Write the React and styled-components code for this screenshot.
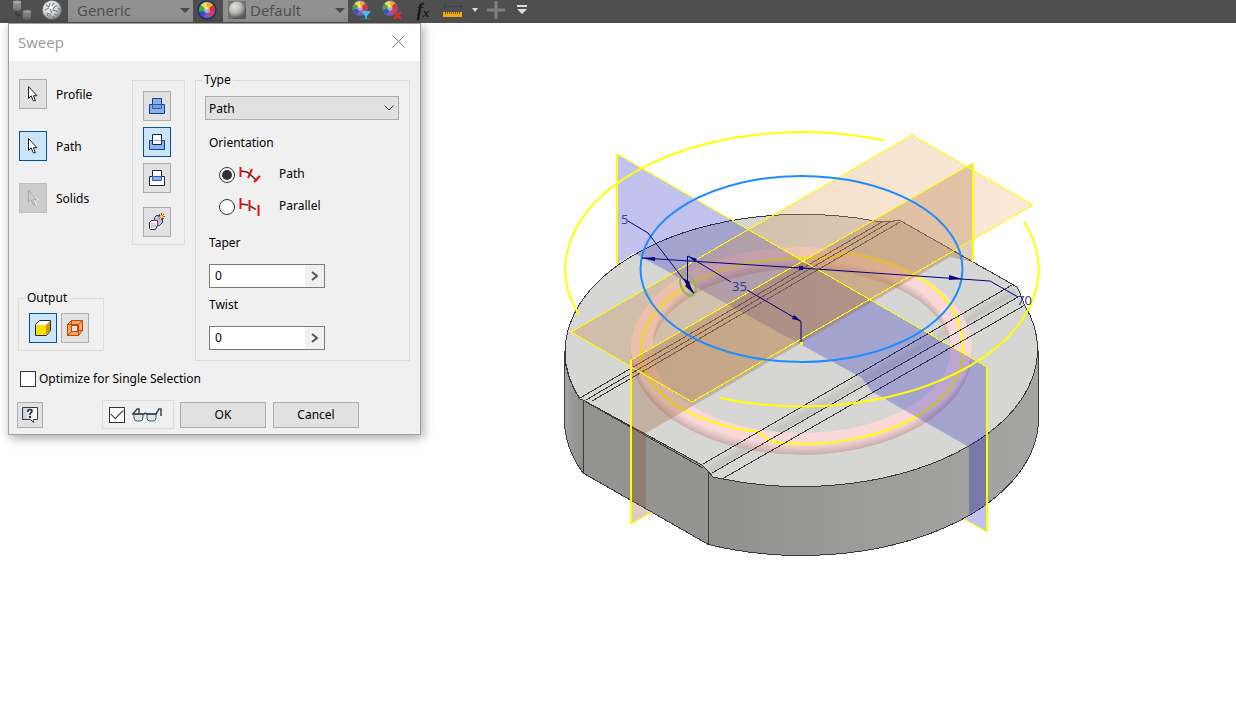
import React from "react";
import styled, { createGlobalStyle, css } from "styled-components";

const GlobalStyle = createGlobalStyle`
  * {
    box-sizing: border-box;
  }
  body {
    margin: 0;
    background: #fff;
    color: #000;
    font-family: "Noto Sans", "Open Sans", sans-serif;
    font-size: 12px;
    line-height: 16px;
  }
  button,
  input,
  select {
    font: inherit;
    color: inherit;
    margin: 0;
  }
`;

const App = () => {
  return (
    <Page>
      <GlobalStyle />
      <TopToolbar />
      <Workspace>
        <SweepDialog />
        <Model />
      </Workspace>
    </Page>
  );
};

export default App;

/* ---------- toolbar ---------- */

const TopToolbar = () => {
  return (
    <Toolbar>
      <ToolButton $width={20} $left={12} aria-label="Bodies">
        <svg width="20" height="20" viewBox="0 0 20 20">
          <path d="M1 1h8v8H1z" fill="#8a8a8a" />
          <ellipse cx="5" cy="2" rx="4" ry="1.5" fill="#a8a8a8" />
          <ellipse cx="5" cy="9" rx="4" ry="1.5" fill="#777" />
          <path d="M11 11h8v7h-8z" fill="#7c7c7c" />
          <ellipse cx="15" cy="11.5" rx="4" ry="1.5" fill="#989898" />
          <ellipse cx="15" cy="18" rx="4" ry="1.5" fill="#6b6b6b" />
          <path d="M4 12v3h4M6 13l2 2-2 2" fill="none" stroke="#333" />
        </svg>
      </ToolButton>
      <ToolButton $width={20} $left={10} aria-label="Material">
        <svg width="20" height="20" viewBox="0 0 20 20">
          <defs>
            <radialGradient id="ball" cx=".4" cy=".35" r=".65">
              <stop offset="0" stopColor="#fff" />
              <stop offset=".6" stopColor="#d2d4d6" />
              <stop offset="1" stopColor="#7d8185" />
            </radialGradient>
          </defs>
          <circle cx="10" cy="10" r="9.5" fill="url(#ball)" />
          <path
            d="M4 5l3 2M8 3l-1 4M12 3l-2 3M15 6l-3 1M3 10l4-2M8 9l2 4M12 10l4 2M5 13l3 1M9 14l-2 3M12 14l4 1M11 16l1 3M5 16l1-2M16 8l2 2M12 7l-1 4"
            stroke="#7f8285"
            strokeWidth="1.2"
          />
        </svg>
      </ToolButton>
      <ComboWrap $left={6}>
        <Combo aria-label="Material" defaultValue="Generic">
          <option>Generic</option>
        </Combo>
        <ComboArrow viewBox="0 0 10 5">
          <path d="M0 0h10L5 5z" fill="#4a4a4a" />
        </ComboArrow>
      </ComboWrap>
      <ToolButton $width={20} $left={4} aria-label="Appearance">
        <ColorWheel size={20} ring />
      </ToolButton>
      <ComboWrap $left={6}>
        <Combo aria-label="Appearance" defaultValue="Default" $swatch>
          <option>Default</option>
        </Combo>
        <Swatch viewBox="0 0 18 18">
          <defs>
            <radialGradient id="swatch" cx=".35" cy=".3" r=".7">
              <stop offset="0" stopColor="#e2e2de" />
              <stop offset=".6" stopColor="#b6b6b2" />
              <stop offset="1" stopColor="#6b6b69" />
            </radialGradient>
          </defs>
          <path d="M0 0h18v18H0z" fill="#727272" />
          <path d="M18 6v12H4z" fill="#5a5a5a" />
          <circle cx="9" cy="8.5" r="8" fill="url(#swatch)" />
        </Swatch>
        <ComboArrow viewBox="0 0 10 5">
          <path d="M0 0h10L5 5z" fill="#4a4a4a" />
        </ComboArrow>
      </ComboWrap>
      <ToolButton $width={20} $left={4} aria-label="Adjust appearance">
        <svg width="20" height="20" viewBox="0 0 20 20">
          <Wheel cx={8} cy={8} r={7.5} />
          <path d="M9 11h10l-4 5v3h-2v-3z" fill="#3fc0f4" />
          <path d="M8 19h11" stroke="#2f7fb4" />
        </svg>
      </ToolButton>
      <ToolButton $width={20} $left={10} aria-label="Clear appearance">
        <svg width="20" height="20" viewBox="0 0 20 20">
          <Wheel cx={8} cy={8} r={7.5} />
          <path d="M12 12l7 7M19 12l-7 7" stroke="#f02a20" strokeWidth="2" />
        </svg>
      </ToolButton>
      <ToolButton $width={20} $left={11} aria-label="Parameters">
        <Fx>
          f<small>x</small>
        </Fx>
      </ToolButton>
      <ToolButton $width={20} $left={10} aria-label="Measure">
        <svg width="20" height="20" viewBox="0 0 20 20">
          <path d="M1 6.5h18M1.5 4v5M18.5 4v5" stroke="#39424d" />
          <path d="M0 12h19v5H0z" fill="#f0a818" />
          <path
            d="M2.5 12v2M4.5 12v2M6.5 12v2M8.5 12v2M10.5 12v2M12.5 12v2M14.5 12v2M16.5 12v2"
            stroke="#8a5a00"
          />
        </svg>
      </ToolButton>
      <ToolButton $width={6} $left={9} aria-label="Measure options">
        <svg width="6" height="4" viewBox="0 0 6 4">
          <path d="M0 0h6L3 4z" fill="#ddd" />
        </svg>
      </ToolButton>
      <ToolButton $width={18} $left={9} aria-label="Add">
        <svg width="18" height="18" viewBox="0 0 18 18">
          <path d="M9 0v18M0 9h18" stroke="#808080" strokeWidth="3" />
        </svg>
      </ToolButton>
      <ToolButton $width={10} $left={12} aria-label="Customize">
        <svg width="10" height="10" viewBox="0 0 10 10">
          <path d="M0 0h10v2H0zM0 4h10L5 9z" fill="#ddd" />
        </svg>
      </ToolButton>
    </Toolbar>
  );
};

const wheelColors = ["#f2a93b", "#e2302c", "#d4406a", "#8d55c8", "#2f55c8", "#4fa83c", "#e6e05a"];

const Wheel = ({ cx, cy, r }) => {
  const step = (Math.PI * 2) / wheelColors.length;
  const point = (i) => {
    const a = i * step - Math.PI / 2;
    return `${cx + r * Math.cos(a)} ${cy + r * Math.sin(a)}`;
  };
  return (
    <g>
      {wheelColors.map((color, i) => (
        <path key={color} d={`M${cx} ${cy}L${point(i)}A${r} ${r} 0 0 1 ${point(i + 1)}z`} fill={color} />
      ))}
      <circle cx={cx} cy={cy} r={r * 0.35} fill="#fff" opacity=".5" />
      <circle cx={cx} cy={cy} r={r} fill="none" stroke="#5a6890" />
    </g>
  );
};

const ColorWheel = ({ size, ring }) => (
  <svg width={size} height={size} viewBox="0 0 20 20">
    <Wheel cx={10} cy={10} r={8.5} />
    {ring && <circle cx="10" cy="10" r="9" fill="none" stroke="#1c3468" strokeWidth="1.5" />}
  </svg>
);

/* ---------- dialog ---------- */

const selectors = [
  { title: "Profile", state: "normal" },
  { title: "Path", state: "active" },
  { title: "Solids", state: "disabled" },
];

const SweepDialog = () => {
  return (
    <Dialog role="dialog" aria-label="Sweep">
      <TitleBar>
        <Title>Sweep</Title>
        <CloseButton aria-label="Close">
          <svg width="13" height="13" viewBox="0 0 13 13">
            <path d="M.5 .5l12 12M12.5 .5l-12 12" stroke="#777" />
          </svg>
        </CloseButton>
      </TitleBar>
      <Body>
        <Columns>
          <LeftColumn>
            <SelectorList>
              {selectors.map((item) => (
                <Selector key={item.title}>
                  <IconButton $active={item.state === "active"} disabled={item.state === "disabled"}>
                    <Cursor disabled={item.state === "disabled"} />
                  </IconButton>
                  <SelectorText>{item.title}</SelectorText>
                </Selector>
              ))}
            </SelectorList>
            <OutputGroup>
              <Legend>Output</Legend>
              <IconButton $active aria-label="Solid">
                <SolidCube />
              </IconButton>
              <IconButton aria-label="Surface">
                <SurfaceCube />
              </IconButton>
            </OutputGroup>
          </LeftColumn>
          <Operations>
            <IconButton aria-label="Join">
              <BooleanIcon top="#8eb2e0" base="#8eb2e0" overlap="#7a9fd6" line="#0c3ca8" topLine="#0c3ca8" />
            </IconButton>
            <IconButton $active aria-label="Cut">
              <BooleanIcon top="#fff" base="#8eb2e0" overlap="#fff" line="#0c3ca8" topLine="#14284e" cut />
            </IconButton>
            <IconButton aria-label="Intersect">
              <BooleanIcon top="#fff" base="#fff" overlap="#8eb2e0" line="#14284e" topLine="#14284e" />
            </IconButton>
            <NewSolidButton aria-label="New solid">
              <NewSolid />
            </NewSolidButton>
          </Operations>
          <TypeGroup>
            <Legend>Type</Legend>
            <TypeSelectWrap>
              <TypeSelect aria-label="Type" defaultValue="Path">
                <option>Path</option>
              </TypeSelect>
              <TypeArrow viewBox="0 0 10 6">
                <path d="M.5 .5L5 5L9.5 .5" fill="none" stroke="#333" />
              </TypeArrow>
            </TypeSelectWrap>
            <Heading>Orientation</Heading>
            <RadioRow>
              <Radio type="radio" name="orientation" defaultChecked />
              <svg width="22" height="20" viewBox="0 0 22 20">
                <path d="M2 6l6 1 6 5 4 4" fill="none" stroke="#333" strokeWidth="1.5" />
                <path d="M1.5 2v10M13 4L9 13M21 11l-6 6" stroke="#f20d0d" strokeWidth="2" />
              </svg>
              <RadioText>Path</RadioText>
            </RadioRow>
            <RadioRow>
              <Radio type="radio" name="orientation" />
              <svg width="22" height="20" viewBox="0 0 22 20">
                <path d="M2 7l7 1 9 5" fill="none" stroke="#333" strokeWidth="1.5" strokeDasharray="7 2" />
                <path d="M1.5 1v11M10.5 3v11M19.5 8v11" stroke="#f20d0d" strokeWidth="2" />
              </svg>
              <RadioText>Parallel</RadioText>
            </RadioRow>
            <FieldLabel htmlFor="taper">Taper</FieldLabel>
            <ValueField id="taper" />
            <TwistLabel htmlFor="twist">Twist</TwistLabel>
            <ValueField id="twist" />
          </TypeGroup>
        </Columns>
        <OptimizeRow>
          <CheckBox type="checkbox" />
          Optimize for Single Selection
        </OptimizeRow>
        <Footer>
          <HelpButton aria-label="Help">
            <svg width="16" height="16" viewBox="0 0 16 16">
              <defs>
                <linearGradient id="help" x2="1">
                  <stop offset="0" stopColor="#c3cedb" />
                  <stop offset="1" stopColor="#fff" />
                </linearGradient>
              </defs>
              <path d="M.5 .5h15v12h-4v3l-3-3h-8z" fill="url(#help)" stroke="#333c48" />
              <path d="M6 5V4q0-1.500 2-1.500T10 4q0 1-1 1.600T8 8" fill="none" stroke="#222" strokeWidth="1.5" />
              <path d="M7 9h2v2H7z" fill="#222" />
            </svg>
          </HelpButton>
          <Preview>
            <CheckBox type="checkbox" aria-label="Preview" defaultChecked />
            <Glasses />
          </Preview>
          <TextButton>OK</TextButton>
          <TextButton>Cancel</TextButton>
        </Footer>
      </Body>
    </Dialog>
  );
};

const ValueField = ({ id }) => (
  <Field>
    <FieldInput id={id} defaultValue="0" />
    <FieldButton aria-label="More">
      <svg width="8" height="10" viewBox="0 0 8 10">
        <path d="M1 1l5 4-5 4" fill="none" stroke="#555" strokeWidth="2" />
      </svg>
    </FieldButton>
  </Field>
);

const Cursor = ({ disabled }) => (
  <svg width="12" height="18" viewBox="0 0 12 18">
    {disabled && <path d="M2 2v12l3-3 2 5h3l-2-5h4z" fill="#fff" />}
    <path
      d="M1.5 1.5v12l2.700-2.600 2 4.800h2.200l-2-5h3.600z"
      fill={disabled ? "#ccc" : "#fff"}
      stroke={disabled ? "#a6a6a6" : "#1a2230"}
    />
  </svg>
);

const BooleanIcon = ({ top, base, overlap, line, topLine, cut }) => (
  <svg width="16" height="16" viewBox="0 0 16 16">
    <path d="M.5 6.5h15v9H.5z" fill={base} stroke={line} />
    <path d="M3.5 .5h9v10h-9z" fill={top} />
    <path d="M3.5 6.5h9v4h-9z" fill={overlap} />
    <path d="M3.5 6.5v-6h9v6" fill="none" stroke={topLine} />
    <path d="M3.5 6.5v4h9v-4" fill="none" stroke={cut ? topLine : "#2a5cc4"} />
    <path d="M4 6.5h8" stroke={cut ? "#aaa" : "#2a5cc4"} />
  </svg>
);

const NewSolid = () => (
  <svg width="16" height="18" viewBox="0 0 16 18">
    <path d="M5.5 4.5l2-2h4l2 2v5l-3 3h-5z" fill="#a9c6ee" stroke="#0c3ca8" />
    <path d="M.5 9.5l2-2h6v5l-2 4h-5l-1-1z" fill="#fff" stroke="#14284e" />
    <path d="M2 10h5v5H2z" fill="#d0d0d0" />
    <path d="M4 7.5h4.5V12" fill="none" stroke="#e01414" />
    <path d="M12.500 0v7M9 3.500h7M10 1l5 5M15 1l-5 5" stroke="#d64000" />
    <circle cx="12.5" cy="3.5" r="1.5" fill="#ffe14a" />
  </svg>
);

const SolidCube = () => (
  <svg width="18" height="18" viewBox="0 0 18 18">
    <path d="M1.5 5.5l4-4h11v10l-4 5h-11z" fill="#fff" stroke="#14284e" />
    <path d="M2 6h10v10H2z" fill="#ffdc00" />
    <path d="M12 6l4-4v9.500L12 16z" fill="#d69a00" />
  </svg>
);

const SurfaceCube = () => (
  <svg width="18" height="18" viewBox="0 0 18 18">
    <path d="M1.5 5.5l4-4h11v10l-4 5h-11z" fill="#ffa565" stroke="#b84a0c" />
    <path d="M5.5 6.5h6v6h-6z" fill="#e1e1e1" stroke="#b84a0c" />
    <path
      d="M1.5 5.5h11v11M12.5 5.5l4-4M5.5 1.5v5M1.5 16.5l4-4M11.5 11.5h5"
      fill="none"
      stroke="#b84a0c"
    />
  </svg>
);

const Glasses = () => (
  <svg width="30" height="14" viewBox="0 0 30 14">
    <path d="M2 6h9v4q0 3-3 3H5q-3 0-3-3zM15 6h9v4q0 3-3 3h-3q-3 0-3-3z" fill="#d7e6ee" stroke="#4a5866" />
    <path d="M0 6h12q1.500-1.500 3 0h10" fill="none" stroke="#2f3a46" strokeWidth="1.5" />
    <path d="M1 6l4-5h2v4M24 6l3-5h2v7" fill="none" stroke="#3b4650" strokeWidth="1.5" />
  </svg>
);

/* ---------- 3D model ---------- */

const topFace =
  "M580 399A237 137 0 0 1 875 221L892 222L895 220L901 221L1010 283L1017 287L1020 293L1024 304A237 137 0 0 1 723 479L713 477L708 471L702 465L583 400z";
const sideFace =
  "M564.5 351V419A237 137 0 0 0 583 473L708.5 544.5A237 137 0 0 0 1038.5 419V351L1024 304L801 300L580 370z";

// each layer lifts the highlight a little higher on the tube
const tubeShades = [
  { lift: 2, color: "#d5b9b7" },
  { lift: 4, color: "#dec2c0" },
  { lift: 6, color: "#e8cac8" },
  { lift: 8, color: "#f2d2d0" },
  { lift: 10, color: "#fad8d7" },
];

const Tube = () => (
  <g fill="none" strokeWidth="22">
    <mask id="tube" maskUnits="userSpaceOnUse" x="600" y="230" width="400" height="240">
      <ellipse cx="801.5" cy="351" rx="160" ry="93" stroke="#fff" />
    </mask>
    <g mask="url(#tube)">
      <ellipse cx="801.5" cy="351" rx="160" ry="93" stroke="#cdb2b0" />
      {tubeShades.map((shade) => (
        <ellipse key={shade.lift} cx="801.5" cy={351 - shade.lift} rx="160" ry="93" stroke={shade.color} />
      ))}
    </g>
  </g>
);

const Model = () => {
  return (
    <Scene viewBox="421 23 815 694" role="img" aria-label="Model with work planes">
      <defs>
        <linearGradient id="side" gradientUnits="userSpaceOnUse" x1="564" x2="1039" y1="0" y2="0">
          <stop offset="0" stopColor="#a3a4a2" />
          <stop offset=".04" stopColor="#8e8f8d" />
          <stop offset=".041" stopColor="#939492" />
          <stop offset=".304" stopColor="#939492" />
          <stop offset=".305" stopColor="#90918f" />
          <stop offset=".6" stopColor="#9b9b99" />
          <stop offset="1" stopColor="#a5a5a3" />
        </linearGradient>
        <linearGradient id="groove" gradientUnits="userSpaceOnUse" x1="850" y1="379" x2="857" y2="391">
          <stop offset="0" stopColor="#d6d7d5" />
          <stop offset=".6" stopColor="#c3c4c2" />
          <stop offset="1" stopColor="#d2d3d1" />
        </linearGradient>
        <linearGradient id="sheet" gradientUnits="userSpaceOnUse" x1="571" x2="1033" y1="0" y2="0">
          <stop offset="0" stopColor="#c07c40" />
          <stop offset=".5" stopColor="#d69858" />
          <stop offset="1" stopColor="#f4b478" />
        </linearGradient>
      </defs>

      <path d={sideFace} fill="url(#side)" />
      <path d={topFace} fill="#d6d7d5" />
      <path d="M703 464L1012 285L1018 297L712 473z" fill="url(#groove)" />

      <Tube />
      <path
        d="M777 442.5Q768 440 762 435T750 431C670 418 641 380 641 351C641 300 712 258 801 258L823 258Q836 257 845 253Q900 260 937 290Q963 315 963 351A161 93 0 0 1 801 444L780 443z"
        fill="none"
        stroke="#ff0"
        strokeWidth="2"
      />

      <g fill="none" stroke="#3a3a3a" shapeRendering="crispEdges">
        <path d="M580 398L882 222M586 400L890 222M592 401L900 222" />
        <path d="M703 464L1012 285M712 473L1018 297M722 479L1025 305" />
        <path d={topFace} />
        <path d="M586 402L703 468" />
        <path d="M564.5 351V419A237 137 0 0 0 583 473L708.5 544.5A237 137 0 0 0 1038.5 419V351" />
        <path d="M564.5 351A237 137 0 0 0 580 399M583.5 400V473M708.5 471V544" />
      </g>

      {/* work planes */}
      <path d="M617 154L987 367V437L969 447L871 391L862 378L634 253L617 264z" fill="#0d0dbb" opacity=".25" />
      <path d="M969 447L987 437V504L969 514z" fill="#3c3cba" opacity=".4" />
      <path d="M964 519L987 504V532z" fill="#0d0dbb" opacity=".25" />
      <path d="M631 360L973 163V262L950 257L646 433L631 425z" fill="#965a28" opacity=".3" />
      <path d="M631 425L646 433V508L631 500z" fill="#8a5a36" opacity=".4" />
      <path d="M631 500L652 512L631 524z" fill="#965a28" opacity=".3" />
      <path d="M912 135L1033 205L692 402L571 332z" fill="url(#sheet)" opacity=".3" />
      <g fill="none" stroke="#ff0" shapeRendering="crispEdges">
        <path d="M617 154L987 367M912 135L1033 205L692 402L571 332zM631 360L973 163M631 524L652 512M964 519L987 532" />
        <path d="M617 154V265M987 367V532M973 163V262M631 360V524" strokeWidth="2" />
      </g>

      {/* sketch curves */}
      <g fill="none" strokeWidth="2">
        <ellipse cx="801.5" cy="269" rx="161" ry="93" stroke="#1e8cff" />
        <path d="M884 140.5A237 137 0 0 0 579 315M1024 222A237 137 0 0 1 720 398" stroke="#ff0" />
        <ellipse cx="688" cy="285" rx="7" ry="11" stroke="#86b562" transform="rotate(-25 688 285)" />
      </g>

      {/* dimensions */}
      <g fill="none" stroke="#000080">
        <path d="M642 258L801 268L990 281L1018 297" />
        <path d="M628 221L648 233L694 293M687.5 256V285" />
        <path d="M688 256L731 282M747 290L801 321.5V343" />
      </g>
      <g fill="#000080">
        <path d="M642 258l13-1v4zM962 279l-13-4v5zM688 256l9 3-2 3zM801 321l-9-2 2-4zM694 294l-9-8 4-4zM683 278l7 4-3 4z" />
        <path d="M799 266h4v4h-4z" />
      </g>
      <path d="M800 342h3v3h-3z" fill="#ff0" />
      <DimText x="621" y="224">5</DimText>
      <DimText x="732" y="291">35</DimText>
      <DimText x="1017" y="305">70</DimText>
    </Scene>
  );
};

/* ---------- styles ---------- */

const Page = styled.div`
  display: flex;
  flex-direction: column;
  min-height: 100vh;
`;

const Toolbar = styled.header`
  display: flex;
  align-items: center;
  height: 23px;
  padding-bottom: 3px;
  background: #4f4f4f;
`;

const ToolButton = styled.button`
  display: flex;
  align-items: center;
  justify-content: center;
  flex: none;
  width: ${(props) => props.$width}px;
  margin-left: ${(props) => props.$left}px;
  padding: 0;
  border: 0;
  background: none;
`;

const Fx = styled.span`
  display: flex;
  align-items: flex-end;
  height: 20px;
  color: #161616;
  font-family: "Liberation Serif", serif;
  font-size: 18px;
  font-style: italic;
  font-weight: bold;
  line-height: 20px;
  small {
    font-size: 13px;
    line-height: 14px;
  }
`;

const ComboWrap = styled.div`
  display: grid;
  align-items: center;
  flex: none;
  width: 125px;
  margin-left: ${(props) => props.$left}px;
  > * {
    grid-area: 1 / 1;
  }
`;

const Combo = styled.select`
  appearance: none;
  width: 100%;
  height: 23px;
  padding: 0 24px 0 ${(props) => (props.$swatch ? 27 : 9)}px;
  border: 0;
  border-radius: 0;
  background: #919191;
  color: #4d4d4d;
  font-family: "Open Sans", sans-serif;
  font-size: 15px;
`;

const ComboArrow = styled.svg`
  justify-self: end;
  width: 10px;
  height: 5px;
  margin-right: 3px;
  pointer-events: none;
`;

const Swatch = styled.svg`
  width: 18px;
  height: 18px;
  margin-left: 5px;
  pointer-events: none;
`;

const Workspace = styled.main`
  display: flex;
  align-items: flex-start;
  flex: 1;
  padding-left: 8px;
`;

const Scene = styled.svg`
  flex: 1;
  align-self: stretch;
  min-width: 0;
`;

const DimText = styled.text`
  fill: #3a3a9c;
  font-family: "Noto Sans", sans-serif;
  font-size: 13px;
`;

const Dialog = styled.section`
  flex: none;
  width: 413px;
  border: 1px solid #a0a0a0;
  background: #f0f0f0;
  box-shadow: 2px 3px 10px rgba(0, 0, 0, 0.35);
`;

const TitleBar = styled.div`
  display: flex;
  align-items: center;
  justify-content: space-between;
  height: 37px;
  padding: 0 15px 2px 9px;
  background: #fff;
`;

const Title = styled.h1`
  margin: 0;
  color: #999;
  font-family: "Open Sans", sans-serif;
  font-size: 15px;
  font-weight: normal;
`;

const CloseButton = styled.button`
  display: flex;
  padding: 0;
  border: 0;
  background: none;
`;

const Body = styled.div`
  padding: 11px 10px 5px 8px;
`;

const Columns = styled.div`
  display: flex;
  align-items: flex-start;
`;

const LeftColumn = styled.div`
  display: flex;
  flex-direction: column;
  width: 115px;
  padding: 7px 0 0 1px;
`;

const SelectorList = styled.div`
  display: grid;
  gap: 22px;
  padding-left: 1px;
`;

const Selector = styled.label`
  display: flex;
  align-items: center;
  gap: 9px;
`;

const SelectorText = styled.span`
  padding-top: 2px;
`;

const IconButton = styled.button`
  display: flex;
  align-items: center;
  justify-content: center;
  width: 28px;
  height: 30px;
  padding: 0;
  border: 1px solid #adadad;
  background: #e1e1e1;
  ${(props) =>
    props.$active &&
    css`
      border-color: #005499;
      background: #cce4f7;
    `}
  &:disabled {
    border-color: #bfbfbf;
    background: #ccc;
  }
`;

const NewSolidButton = styled(IconButton)`
  margin-top: 8px;
`;

const Group = styled.fieldset`
  min-width: 0;
  margin: 0;
  border: 1px solid #dcdcdc;
`;

const Legend = styled.legend`
  height: 16px;
  padding: 0 2px;
`;

const OutputGroup = styled(Group)`
  display: flex;
  gap: 4px;
  width: 86px;
  margin-top: 77px;
  padding: 7px 10px;
  legend {
    margin-left: -4px;
  }
`;

const Operations = styled.div`
  display: flex;
  flex-direction: column;
  gap: 6px;
  margin: 8px 10px 0 0;
  padding: 10px 13px 7px 10px;
  border: 1px solid #dcdcdc;
`;

const TypeGroup = styled(Group)`
  flex: 1;
  padding: 8px 10px 10px 9px;
  legend {
    margin-left: -3px;
  }
`;

const TypeSelectWrap = styled.div`
  display: grid;
  align-items: center;
  > * {
    grid-area: 1 / 1;
  }
`;

const TypeSelect = styled.select`
  appearance: none;
  width: 100%;
  height: 24px;
  padding: 1px 20px 0 3px;
  border: 1px solid #adadad;
  border-radius: 0;
  background: #e1e1e1;
`;

const TypeArrow = styled.svg`
  justify-self: end;
  width: 10px;
  height: 6px;
  margin-right: 5px;
  pointer-events: none;
`;

const Heading = styled.div`
  margin: 15px 4px 8px;
`;

const RadioRow = styled.label`
  display: flex;
  align-items: center;
  height: 32px;
  padding-left: 14px;
`;

const Radio = styled.input`
  appearance: none;
  display: grid;
  place-items: center;
  width: 16px;
  height: 16px;
  margin-right: 4px;
  border: 1px solid #333;
  border-radius: 50%;
  background: #fff;
  &:checked::before {
    content: "";
    width: 10px;
    height: 10px;
    border-radius: 50%;
    background: #333;
  }
`;

const RadioText = styled.span`
  margin-left: 18px;
  padding-bottom: 2px;
`;

const FieldLabel = styled.label`
  display: block;
  margin: 12px 4px 13px;
`;

const TwistLabel = styled(FieldLabel)`
  margin-top: 9px;
`;

const Field = styled.div`
  display: flex;
  width: 116px;
  height: 24px;
  margin-left: 4px;
  border: 1px solid #7a7a7a;
`;

const FieldInput = styled.input`
  flex: 1;
  min-width: 0;
  padding: 0 5px;
  border: 0;
  background: #fff;
`;

const FieldButton = styled.button`
  display: flex;
  align-items: center;
  justify-content: center;
  width: 19px;
  padding: 0;
  border: 0;
  background: #f0f0f0;
`;

const CheckBox = styled.input`
  appearance: none;
  display: grid;
  place-items: center;
  flex: none;
  width: 16px;
  height: 16px;
  border: 1px solid #333;
  background: #fff;
  &:checked::before {
    content: "";
    width: 11px;
    height: 6px;
    margin-bottom: 4px;
    border: solid #333;
    border-width: 0 0 1px 1px;
    transform: rotate(-45deg);
  }
`;

const OptimizeRow = styled.label`
  display: flex;
  align-items: center;
  gap: 3px;
  margin: 10px 0 13px 3px;
`;

const Footer = styled.div`
  display: flex;
  align-items: center;
  gap: 7px;
`;

const HelpButton = styled(IconButton)`
  width: 26px;
  height: 26px;
`;

const Preview = styled.label`
  display: flex;
  align-items: center;
  gap: 7px;
  width: 72px;
  height: 29px;
  margin: 0 -1px 0 52px;
  padding-left: 6px;
  border: 1px solid #dcdcdc;
`;

const TextButton = styled.button`
  width: 86px;
  height: 26px;
  padding: 0;
  border: 1px solid #adadad;
  background: #e1e1e1;
`;
